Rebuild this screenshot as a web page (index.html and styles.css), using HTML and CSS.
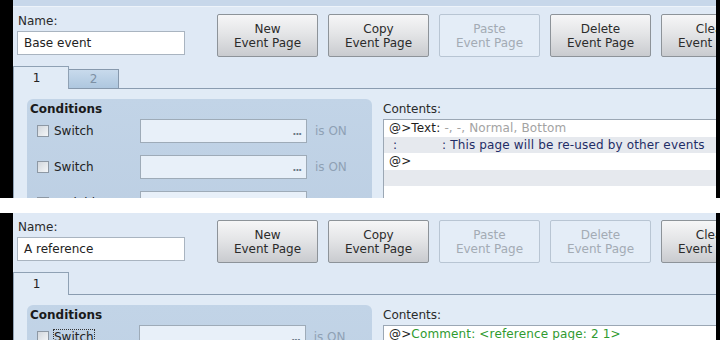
FILE: index.html
```html
<!DOCTYPE html>
<html>
<head>
<meta charset="utf-8">
<link rel="stylesheet" href="styles.css">
</head>
<body>
<div class="screen">
  <section class="editor editor--first">
    <div class="strip"></div>
    <div class="header">
      <div class="name-block">
        <div class="label">Name:</div>
        <div class="textbox">Base event</div>
      </div>
      <div class="buttons">
        <div class="btn">New<br>Event Page</div>
        <div class="btn">Copy<br>Event Page</div>
        <div class="btn btn--disabled">Paste<br>Event Page</div>
        <div class="btn">Delete<br>Event Page</div>
        <div class="btn">Clear<br>Event Page</div>
      </div>
    </div>
    <div class="tabs">
      <div class="tab tab--active">1</div>
      <div class="tab tab--inactive">2</div>
      <div class="tab-fill"></div>
    </div>
    <div class="page">
      <div class="conditions">
        <div class="cond-title">Conditions</div>
        <div class="cond-row">
          <span class="check"></span><span class="cond-label">Switch</span>
          <span class="picker"><span class="dots">...</span></span><span class="cond-state">is ON</span>
        </div>
        <div class="cond-row">
          <span class="check"></span><span class="cond-label">Switch</span>
          <span class="picker"><span class="dots">...</span></span><span class="cond-state">is ON</span>
        </div>
        <div class="cond-row">
          <span class="check"></span><span class="cond-label">Variable</span>
          <span class="picker"><span class="dots">...</span></span><span class="cond-state">&gt;=</span>
        </div>
      </div>
      <div class="contents">
        <div class="label">Contents:</div>
        <div class="listing">
          <div class="line"><span class="cmd">@&gt;Text:</span> <span class="muted">-, -, Normal, Bottom</span></div>
          <div class="line line--alt"><span class="msg"><span class="colon">:</span><span class="msg-text">: This page will be re-used by other events</span></span></div>
          <div class="line"><span class="cmd">@&gt;</span></div>
          <div class="line line--alt"></div>
          <div class="line"></div>
        </div>
      </div>
    </div>
  </section>

  <section class="editor editor--second">
    <div class="header">
      <div class="name-block">
        <div class="label">Name:</div>
        <div class="textbox">A reference</div>
      </div>
      <div class="buttons">
        <div class="btn">New<br>Event Page</div>
        <div class="btn">Copy<br>Event Page</div>
        <div class="btn btn--disabled">Paste<br>Event Page</div>
        <div class="btn btn--disabled">Delete<br>Event Page</div>
        <div class="btn">Clear<br>Event Page</div>
      </div>
    </div>
    <div class="tabs">
      <div class="tab tab--active">1</div>
      <div class="tab-fill"></div>
    </div>
    <div class="page">
      <div class="conditions">
        <div class="cond-title">Conditions</div>
        <div class="cond-row">
          <span class="check"></span><span class="cond-label cond-label--focus">Switch</span>
          <span class="picker"><span class="dots">...</span></span><span class="cond-state">is ON</span>
        </div>
      </div>
      <div class="contents">
        <div class="label">Contents:</div>
        <div class="listing">
          <div class="line"><span class="cmd">@&gt;</span><span class="comment">Comment: &lt;reference page: 2 1&gt;</span></div>
        </div>
      </div>
    </div>
  </section>
</div>
</body>
</html>
```
FILE: styles.css
```css
* { box-sizing: border-box; }

html, body {
  margin: 0;
  padding: 0;
  background: #ffffff;
}

body {
  width: 720px;
  height: 340px;
  overflow: hidden;
  font-family: "DejaVu Sans", Verdana, sans-serif;
  font-size: 12px;
  color: #2a2a2a;
}

.screen {
  display: flex;
  flex-direction: column;
  gap: 15px;
}

.editor {
  background: #dfe9f5;
  border-left: 13px solid #000;
  border-right: 4px solid #000;
  overflow: hidden;
  flex: none;
}

.editor--first { height: 198px; }
.editor--second { height: 127px; }

.strip {
  height: 7px;
  background: #c7d7ea;
  border-bottom: 1px solid #edf3fa;
}

.header {
  display: flex;
  gap: 32px;
  height: 59px;
  padding: 7px 0 0 4px;
}

.name-block {
  width: 168px;
  flex: none;
}

.label {
  line-height: 14px;
  height: 14px;
  color: #2a2a2a;
}

.name-block .label { margin-left: 1px; }

.textbox {
  margin-top: 3px;
  height: 24px;
  line-height: 22px;
  padding-left: 6px;
  background: #ffffff;
  border: 1px solid #a9b4c0;
  color: #222;
}

.buttons {
  display: flex;
  gap: 10px;
  flex: none;
}

.btn {
  width: 101px;
  height: 43px;
  flex: none;
  display: flex;
  align-items: center;
  justify-content: center;
  text-align: center;
  line-height: 14px;
  color: #2b2b2b;
  background: linear-gradient(#f6f6f7, #e4e5e7 45%, #c9cbcf);
  border: 1px solid #8d9399;
  border-radius: 2px;
}

.btn--disabled {
  background: #e4edf7;
  border-color: #b8c5d3;
  color: #a3abb4;
}

.tabs {
  display: flex;
  align-items: flex-end;
  height: 23px;
}

.tab {
  flex: none;
  text-align: center;
}

.tab--active {
  width: 56px;
  height: 23px;
  line-height: 22px;
  padding-right: 9px;
  border: 1px solid #8fa1b4;
  border-bottom: none;
  background: #e1ebf6;
  color: #222;
}

.tab--inactive {
  width: 50px;
  height: 20px;
  line-height: 19px;
  background: linear-gradient(#c8daec, #aec7df);
  border: 1px solid #8799ad;
  border-left: none;
  color: #7d90a4;
}

.tab-fill {
  flex: 1;
  border-bottom: 1px solid #8a9cb0;
}

.page {
  display: flex;
  gap: 11px;
  padding: 10px 0 0 13px;
  border-left: 1px solid #8fa1b4;
  background: #e1ebf6;
  height: 200px;
}

.conditions {
  width: 345px;
  flex: none;
  background: linear-gradient(#c2d4e7, #b9cce1);
  border-radius: 6px 6px 0 0;
  padding: 3px 0 0 10px;
}

.cond-title {
  font-weight: bold;
  line-height: 14px;
  margin-left: -7px;
  color: #1a1a1a;
}

.cond-row {
  display: flex;
  align-items: center;
  height: 24px;
  margin-top: 3px;
}

.cond-row + .cond-row { margin-top: 12px; }

.check {
  width: 12px;
  height: 12px;
  flex: none;
  border: 1px solid #8d98a4;
  background: linear-gradient(135deg, #d2d7dd, #f4f6f8);
}

.cond-label {
  width: 86px;
  margin-left: 5px;
  flex: none;
  line-height: 14px;
  color: #222;
}

.cond-label--focus {
  width: auto;
  margin-right: 45px;
  outline: 1px dotted #333;
  outline-offset: 0;
}

.picker {
  width: 167px;
  height: 24px;
  flex: none;
  display: flex;
  align-items: center;
  justify-content: flex-end;
  padding-right: 5px;
  background: #e8f0f9;
  border: 1px solid #9eabb8;
}

.dots {
  font-size: 10px;
  font-weight: bold;
  color: #6c7a88;
  letter-spacing: -1px;
}

.cond-state {
  margin-left: 8px;
  color: #8fa1b5;
}

.contents {
  flex: 1;
  padding-top: 3px;
}

.listing {
  margin-top: 3px;
  background: #ffffff;
  border-top: 1px solid #9ba7b4;
  border-left: 1px solid #9ba7b4;
  height: 200px;
}

.line {
  height: 16.5px;
  line-height: 16px;
  padding-left: 5px;
  white-space: nowrap;
  letter-spacing: 0.15px;
}

.line--alt { background: #e6e9ee; }

.cmd { color: #1e1e1e; }
.muted { color: #a3a3a3; }
.msg { color: #1f2d66; }
.colon { display: inline-block; width: 53px; padding-left: 4px; }
.comment { color: #2f9a2f; }
```
